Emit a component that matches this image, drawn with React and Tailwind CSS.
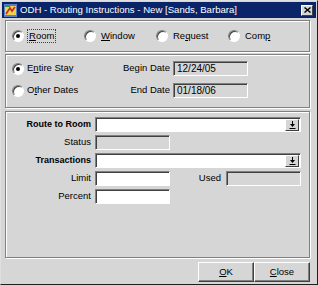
import React from "react";

const FONT = { fontFamily: '"Liberation Sans", Arial, sans-serif' };

function Radio({ checked }) {
  return (
    <span className="relative inline-block h-[12px] w-[12px] shrink-0 rounded-full border border-t-[#808080] border-l-[#808080] border-b-white border-r-white bg-white shadow-[inset_1px_1px_0_#404040]">
      {checked && (
        <span className="absolute left-[3px] top-[3px] h-[4px] w-[4px] rounded-full bg-black" />
      )}
    </span>
  );
}

function Field({ width, gray, value, drop }) {
  return (
    <div
      className={`flex h-[15px] items-center border border-t-[#808080] border-l-[#808080] border-b-white border-r-white shadow-[inset_1px_1px_0_#404040] ${gray ? "bg-[#d6d6d6]" : "bg-white"}`}
      style={{ width }}
    >
      <span className="flex-1 pl-[3px] text-[10px] leading-none text-black">{value}</span>
      {drop && (
        <span className="mr-[1px] flex h-[12px] w-[14px] items-center justify-center bg-[#d6d6d6] border border-t-white border-l-white border-b-[#404040] border-r-[#404040]">
          <svg width="7" height="8" viewBox="0 0 7 8">
            <path d="M3 0h1v3h2L3.5 6 1 3h2z" fill="#000" />
            <rect x="0.5" y="7" width="6" height="1" fill="#000" />
          </svg>
        </span>
      )}
    </div>
  );
}

function Etched({ className, children }) {
  return (
    <div className={`border border-[#808080] shadow-[inset_1px_1px_0_#ffffff,1px_1px_0_#ffffff] ${className}`}>
      {children}
    </div>
  );
}

const U = ({ children }) => <span className="underline underline-offset-[1px]">{children}</span>;

export default function App() {
  return (
    <div
      className="flex h-[285px] w-[318px] flex-col border border-t-[#e0e0e0] border-l-[#e0e0e0] border-b-[#202020] border-r-[#202020] bg-[#d6d6d6] text-[9.5px] text-black"
      style={FONT}
    >
      {/* title bar */}
      <div className="mx-[1px] mt-[1px] flex h-[16px] items-center bg-[#0a246a] pl-[2px] pr-[3px]">
        <svg width="13" height="13" viewBox="0 0 13 13" className="shrink-0">
          <rect x="0" y="0" width="13" height="13" fill="#5a7fc8" />
          <rect x="1" y="2" width="11" height="9" fill="#f2d24a" />
          <path d="M2 10 L6 4 L8 7 L11 3" stroke="#c0282c" strokeWidth="1.6" fill="none" />
          <rect x="1" y="1" width="5" height="2" fill="#2c9a3c" />
        </svg>
        <span className="ml-[3px] flex-1 text-[9.6px] text-white">
          ODH - Routing Instructions - New [Sands, Barbara]
        </span>
        <span className="flex h-[11px] w-[12px] items-center justify-center bg-[#d6d6d6] border border-t-white border-l-white border-b-[#404040] border-r-[#404040]">
          <svg width="7" height="6" viewBox="0 0 7 6">
            <path d="M0.5 0.5 L6.5 5.5 M6.5 0.5 L0.5 5.5" stroke="#000" strokeWidth="1.4" />
          </svg>
        </span>
      </div>

      <div className="flex flex-1 flex-col pl-[4px] pr-[7px] pt-[2px]">
        {/* route type */}
        <Etched className="flex h-[32px] items-center pl-[6px]">
          {["Room", "Window", "Request", "Comp"].map((k) => (
            <div key={k} className="flex w-[72px] items-center gap-[3px]">
              <Radio checked={k === "Room"} />
              {k === "Room" ? (
                <span className="border border-dotted border-[#404040] px-[1px] leading-[12px]">
                  <U>R</U>oom
                </span>
              ) : k === "Request" ? (
                <span className="px-[2px]">Re<U>q</U>uest</span>
              ) : k === "Comp" ? (
                <span className="px-[2px]">Com<U>p</U></span>
              ) : (
                <span className="px-[2px]"><U>W</U>indow</span>
              )}
            </div>
          ))}
        </Etched>

        {/* dates */}
        <Etched className="mt-[2px] flex h-[54px] flex-col gap-[7px] pl-[6px] pt-[6px]">
          <div className="flex h-[15px] items-center">
            <Radio checked />
            <span className="ml-[3px] w-[90px]">E<U>n</U>tire Stay</span>
            <span className="w-[53px] text-right">Begin Date</span>
            <div className="ml-[3px]"><Field width={75} gray value="12/24/05" /></div>
          </div>
          <div className="flex h-[15px] items-center">
            <Radio />
            <span className="ml-[3px] w-[90px]">O<U>t</U>her Dates</span>
            <span className="w-[53px] text-right">End Date</span>
            <div className="ml-[3px]"><Field width={75} gray value="01/18/06" /></div>
          </div>
        </Etched>

        {/* routing */}
        <Etched className="mt-[3px] flex h-[147px] flex-col gap-[3px] pt-[5px]">
          <div className="flex h-[15px] items-center">
            <span className="w-[85px] text-right text-[9px] font-bold">Route to Room</span>
            <div className="ml-[4px]"><Field width={206} drop /></div>
          </div>
          <div className="flex h-[15px] items-center">
            <span className="w-[85px] text-right">Status</span>
            <div className="ml-[4px]"><Field width={75} gray /></div>
          </div>
          <div className="flex h-[15px] items-center">
            <span className="w-[85px] text-right text-[9px] font-bold">Transactions</span>
            <div className="ml-[4px]"><Field width={206} drop /></div>
          </div>
          <div className="flex h-[15px] items-center">
            <span className="w-[85px] text-right">Limit</span>
            <div className="ml-[4px]"><Field width={75} /></div>
            <span className="w-[51px] text-right">Used</span>
            <div className="ml-[5px]"><Field width={75} gray /></div>
          </div>
          <div className="flex h-[15px] items-center">
            <span className="w-[85px] text-right">Percent</span>
            <div className="ml-[4px]"><Field width={75} /></div>
          </div>
        </Etched>

        {/* buttons */}
        <div className="mt-[4px] flex justify-end">
          {[["O", "K"], ["C", "lose"]].map(([a, b]) => (
            <button
              key={a}
              type="button"
              className="flex h-[20px] w-[56px] items-center justify-center border border-t-white border-l-white border-b-[#404040] border-r-[#404040] bg-[#d6d6d6] text-[9.5px] shadow-[inset_-1px_-1px_0_#808080]"
            >
              <U>{a}</U>{b}
            </button>
          ))}
        </div>
      </div>
    </div>
  );
}
